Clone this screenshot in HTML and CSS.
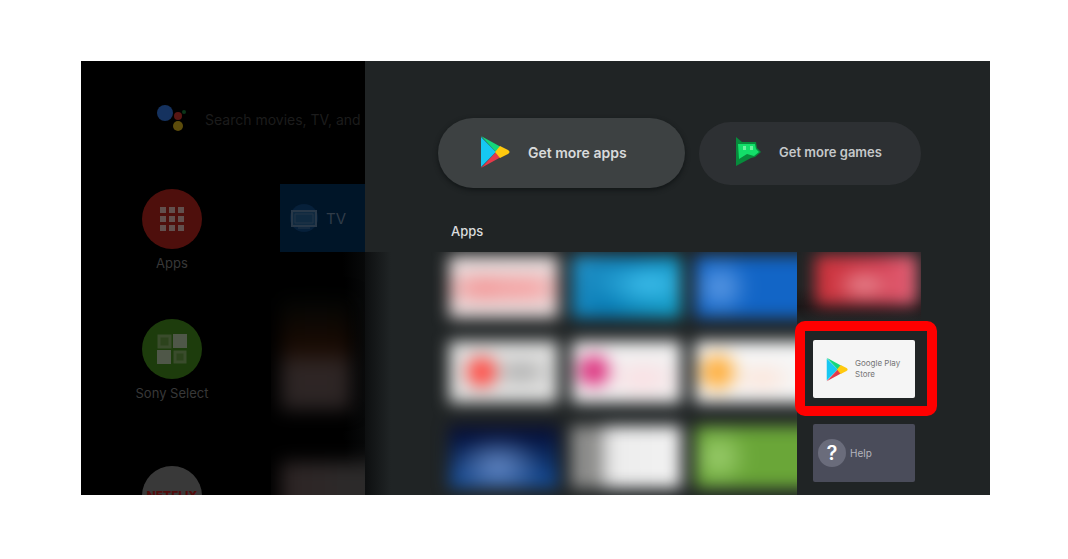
FILE: index.html
```
<!DOCTYPE html>
<html lang="en">
<head>
<meta charset="utf-8">
<title>Android TV apps</title>
<link rel="stylesheet" href="styles.css">
</head>
<body>
<svg class="defs" aria-hidden="true">
  <symbol id="play" viewBox="0 0 30 32">
    <path fill="#16c8f2" d="M1 1v30l15-15z"/>
    <path fill="#14d77b" d="M1 0l20 11-5 5z"/>
    <path fill="#e5394a" d="M1 32l15-16 5 5z"/>
    <path fill="#ffc90e" d="M20 10l8 4q3 2 0 4l-8 4-5-6z"/>
  </symbol>
</svg>
<main class="screen">
  <section class="home">
    <div class="search">
      <svg class="assistant" viewBox="0 0 30 30" aria-hidden="true">
        <circle cx="8" cy="9" r="8" fill="#15325f"/>
        <circle cx="21" cy="12" r="4" fill="#581613"/>
        <circle cx="21" cy="22" r="5" fill="#5c4c0b"/>
        <circle cx="27" cy="8" r="2" fill="#0a3518"/>
      </svg>
      <span class="query">Search movies, TV, and</span>
    </div>
    <div class="home-body">
      <nav class="rail">
        <a class="rail-item" href="#apps">
          <span class="disc red">
            <svg viewBox="0 0 26 26" width="26" height="26" fill="#62504e" aria-hidden="true"><path d="M1 1h6v6H1zM10 1h6v6h-6zM19 1h6v6h-6zM1 10h6v6H1zM10 10h6v6h-6zM19 10h6v6h-6zM1 19h6v6H1zM10 19h6v6h-6zM19 19h6v6h-6z"/></svg>
          </span>
          <span>Apps</span>
        </a>
        <a class="rail-item" href="#select">
          <span class="disc green">
            <svg viewBox="0 0 30 30" width="30" height="30" aria-hidden="true"><path fill="#4f5748" d="M16 0h14v14H16zM0 16h14v14H0z"/><path fill="#2c431c" stroke="#3a4c2c" stroke-width="3" d="M2 2h11v11H2zM18 18h10v10H18z"/></svg>
          </span>
          <span>Sony Select</span>
        </a>
        <a class="rail-item last" href="#netflix"><span class="disc grey">NETFLIX</span></a>
      </nav>
      <div class="feed">
        <a class="tv" href="#tv">
          <svg viewBox="0 0 28 28" width="28" height="28" aria-hidden="true"><circle cx="14" cy="14" r="14" fill="#06203a"/><path fill="#102a40" stroke="#283848" stroke-width="2" d="M2 7h24v15H2z"/><path fill="none" stroke="#223446" d="M5 10h18v9H5zM8 24h12"/></svg>
          <span>TV</span>
        </a>
        <div class="shade">
          <div class="posters">
            <div class="poster warm"></div>
            <div class="poster pale"></div>
          </div>
        </div>
      </div>
    </div>
  </section>
  <section class="panel">
    <div class="actions">
      <button class="pill active"><svg class="play-lg" aria-hidden="true"><use href="#play"/></svg>Get more apps</button>
      <button class="pill"><svg viewBox="0 0 26 30" width="26" height="30" aria-hidden="true"><path fill="#078b3c" d="M1 0l6 5h14l1 6 4 4-6 5-4 1L1 29z"/><path fill="#13df69" d="M3 7h17l1 5 3 3-5 4-7-2-8 5z"/><path fill="#6cf29f" d="M8 9h3v4H8zM15 9h3v4h-3z"/></svg>Get more games</button>
    </div>
    <h2 class="heading">Apps</h2>
    <div class="apps">
      <div class="hazy">
        <div class="hazy-grid">
          <div class="app netflix"></div><div class="app prime"></div><div class="app blue"></div>
          <div class="app youtube"></div><div class="app pink"></div><div class="app orange"></div>
          <div class="app navy"></div><div class="app white"></div><div class="app lime"></div>
        </div>
      </div>
      <div class="column">
        <div class="crimson-wrap"><div class="crimson"></div></div>
        <a class="tile store" href="#store"><svg class="play-sm" aria-hidden="true"><use href="#play"/></svg><span>Google Play<br>Store</span></a>
        <a class="tile help" href="#help"><span class="mark">?</span><span>Help</span></a>
      </div>
    </div>
  </section>
</main>
</body>
</html>
```
FILE: styles.css
```
* { box-sizing: border-box; }
body {
  margin: 0;
  padding: 61px 78px 64px 81px;
  height: 100vh;
  display: flex;
  background: #fff;
  font-family: Inter, "Liberation Sans", sans-serif;
  font-size: 13px;
}
a { color: inherit; text-decoration: none; }
.defs { display: none; }
.screen { flex: 1; display: flex; overflow: hidden; background: #000; }

.home { flex: 0 0 284px; min-width: 0; overflow: hidden; display: flex; flex-direction: column; color: #383838; }
.search { flex: none; display: flex; align-items: center; gap: 18px; padding: 42px 0 0 76px; height: 74px; white-space: nowrap; }
.assistant { flex: none; width: 30px; height: 30px; }
.query { font-size: 14px; color: #1c1c1c; }
.home-body { flex: 1; min-height: 0; display: flex; padding-top: 49px; }
.rail { flex: 0 0 182px; padding-top: 5px; display: flex; flex-direction: column; gap: 48px; }
.rail-item { display: flex; flex-direction: column; align-items: center; gap: 6px; line-height: 16px; }
.rail-item.last { margin-top: 17px; }
.disc { flex: none; width: 60px; height: 60px; border-radius: 50%; display: flex; align-items: center; justify-content: center; }
.red { background: #4e0f0c; }
.green { background: #1d3c0c; }
.grey { background: #393939; color: #520c0c; font-size: 12px; font-weight: 800; }
.feed { flex: 1; margin-left: 8px; display: flex; flex-direction: column; }
.tv { flex: none; margin-left: 9px; height: 68px; padding-left: 10px; display: flex; align-items: center; gap: 8px; background: #001528; color: #303c48; font-size: 15px; }
.shade { flex: 1; min-height: 0; overflow: hidden; background: linear-gradient(90deg, #000 65%, #0d0f10); }
.posters { padding: 46px 0 0 10px; display: grid; gap: 52px; filter: blur(9px); }
.poster { height: 112px; width: 70px; }
.warm { background: linear-gradient(#020504, #1a0b03 45%, #2f2625 62%, #2b2424); }
.pale { width: 100px; background: linear-gradient(90deg, #2d2424, #2c2c2c); }

.panel { flex: 1; min-width: 0; display: flex; flex-direction: column; background: #202425; color: #d9dcde; }
.actions { display: flex; align-items: center; gap: 14px; padding: 57px 0 0 73px; }
.pill { width: 222px; height: 63px; padding: 0 0 2px 36px; display: flex; align-items: center; gap: 18px; border: 0; border-radius: 36px; background: #2d3033; color: #c5c8ca; font: 600 13px Inter, sans-serif; white-space: nowrap; }
.pill.active { width: 247px; height: 70px; padding-left: 42px; background: #3d4142; color: #d8dadb; font-size: 14px; box-shadow: 0 2px 5px #111516; }
.play-lg { width: 30px; height: 32px; }
.heading { margin: 34px 0 0 86px; font-size: 13px; font-weight: 500; line-height: 18px; }
.apps { flex: 1; min-height: 0; margin-top: 12px; display: flex; }
.hazy { flex: 0 0 432px; overflow: hidden; background: linear-gradient(90deg, #0d0f10, #202425 26px); }
.hazy-grid { padding: 4px 0 0 84px; display: grid; grid-template-columns: repeat(3, 109px); grid-auto-rows: 62px; gap: 23px 14px; filter: blur(8px); }
.netflix { background: radial-gradient(ellipse at 30% 52%, #f68f8f, transparent 46%), radial-gradient(ellipse at 72% 52%, #f99c9c, transparent 46%), #e8dede; }
.prime { background: radial-gradient(ellipse at 70% 45%, #3fc0ee, transparent 55%), linear-gradient(120deg, #2693c8, #087cb5 45%, #12a0c7); }
.blue { width: 140px; background: radial-gradient(circle at 18% 50%, #5f9ce6, transparent 26%), #1265c6; }
.youtube { background: radial-gradient(circle at 30% 50%, #ff5049 12%, transparent 24%), radial-gradient(ellipse at 66% 50%, #a6a6a6, transparent 34%), #dfdfde; }
.pink { background: radial-gradient(circle at 20% 48%, #dc2c7b 9%, transparent 23%), radial-gradient(ellipse at 65% 60%, #fbdde1, transparent 45%), #f2f2f2; }
.orange { width: 140px; background: radial-gradient(circle at 16% 50%, #ffae3b 7%, transparent 20%), radial-gradient(ellipse at 48% 60%, #fde3d6, transparent 35%), #f6f6f6; }
.navy { background: radial-gradient(ellipse at 45% 66%, #6488c4, transparent 56%), linear-gradient(#05092e, #0c2f68 55%, #15509d); }
.white { background: linear-gradient(90deg, #a0a09f, #80807e 20%, #ececec 36%, #f2f2f2); }
.lime { width: 140px; background: radial-gradient(circle at 17% 50%, #9ed070, transparent 26%), #6aa638; }

.column { width: 124px; }
.crimson-wrap { height: 68px; overflow: hidden; padding: 3px 4px 0 18px; background: linear-gradient(#202425 50%, #1b1718 80%, #202425); }
.crimson { height: 50px; background: radial-gradient(ellipse at 48% 60%, #e9929a, transparent 40%), linear-gradient(90deg, #cb333b, #d43f52 60%, #e4667b); filter: blur(8px); }
.tile { position: relative; width: 102px; height: 58px; margin-left: 16px; display: flex; align-items: center; border-radius: 2px; }
.store { margin-top: 20px; padding-left: 13px; gap: 7px; background: #f5f5f5; color: #747474; font-size: 8px; line-height: 11px; white-space: nowrap; }
.store::after { content: ""; position: absolute; inset: -19px -22px -18px -18px; border: 10px solid #f00; border-radius: 10px; }
.play-sm { flex: none; width: 22px; height: 25px; }
.help { margin-top: 26px; padding-left: 5px; gap: 4px; background: #4a4c5a; color: #b4b5bd; font-size: 10px; }
.mark { width: 28px; height: 28px; border-radius: 50%; background: #6a6c7b; color: #fff; font-size: 20px; font-weight: 600; line-height: 28px; text-align: center; }
```
